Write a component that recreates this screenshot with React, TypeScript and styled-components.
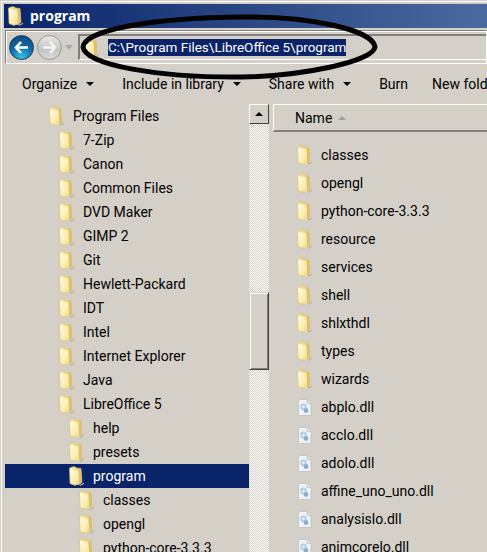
import React from 'react'
import styled, {createGlobalStyle} from 'styled-components'

const Global = createGlobalStyle`
  html, body {
    margin: 0;
    padding: 0;
    background: #d4d0c8;
  }
  body {
    font-family: Roboto, "Open Sans", sans-serif;
    font-size: 14px;
    color: #000;
  }
`

const Root = styled.div`
  position: relative;
  width: 487px;
  height: 552px;
  overflow: hidden;
  background: #d4d0c8;
  box-sizing: border-box;
  padding: 1px 0 0 1px;
`

const Frame = styled.div`
  height: 100%;
  box-sizing: border-box;
  border-top: 1px solid #fff;
  border-left: 1px solid #fff;
  padding: 2px 0 0 2px;
  display: flex;
  flex-direction: column;
`

const TitleBar = styled.div`
  height: 24px;
  flex: none;
  display: flex;
  align-items: center;
  gap: 7px;
  padding: 0 0 1px 4px;
  box-sizing: border-box;
  background: linear-gradient(to right, #0a246a, #4a6a9f);
  color: #fff;
  font-family: "Open Sans", sans-serif;
  font-weight: 700;
  font-size: 14px;
`

const AddressRow = styled.div`
  height: 34px;
  flex: none;
  margin-top: 2px;
  display: flex;
  align-items: center;
  box-sizing: border-box;
  margin-left: 1px;
  border: 1px solid;
  border-color: #808080 #fff #fff #808080;
  box-shadow: inset 1px 1px 0 #fff;
  padding-left: 3px;
`

const NavCircle = styled.div<{$active?: boolean}>`
  width: 25px;
  height: 25px;
  border-radius: 50%;
  flex: none;
  display: flex;
  align-items: center;
  justify-content: center;
  margin-right: 3px;
  border: 1px solid ${p => p.$active ? '#16405f' : '#9a9a9a'};
  box-sizing: border-box;
  background: ${p => p.$active
    ? 'radial-gradient(circle at 50% 95%, #38c0ee 0%, #116aa8 50%, #0c3f78 100%)'
    : 'linear-gradient(#e8e8e8, #c4c4c4 60%, #d8d8d8)'};
`

const DropCaret = styled.div`
  width: 0;
  height: 0;
  margin: 0 5px 0 0;
  border-left: 4px solid transparent;
  border-right: 4px solid transparent;
  border-top: 5px solid #a8a8a8;
`

const AddressBox = styled.div`
  flex: 1;
  height: 26px;
  display: flex;
  align-items: center;
  gap: 9px;
  padding-left: 4px;
  background: #d4d0c8;
  border-top: 2px solid #808080;
  border-left: 2px solid #808080;
  border-bottom: 1px solid #fff;
  box-sizing: border-box;
`

const SelectedPath = styled.span`
  background: #0a246a;
  color: #fff;
  height: 17px;
  line-height: 17px;
  font-size: 13.5px;
  white-space: nowrap;
`

const Toolbar = styled.div`
  height: 40px;
  flex: none;
  display: flex;
  align-items: center;
  padding-left: 18px;
  white-space: nowrap;
`

const ToolItem = styled.div<{$gap: number}>`
  display: flex;
  align-items: center;
  gap: 9px;
  margin-right: ${p => p.$gap}px;
`

const Caret = styled.div`
  width: 0;
  height: 0;
  border-left: 4px solid transparent;
  border-right: 4px solid transparent;
  border-top: 4px solid #000;
`

const Panes = styled.div`
  flex: 1;
  min-height: 0;
  display: flex;
  margin-left: 1px;
`

const TreePane = styled.div`
  width: 244px;
  flex: none;
  overflow: hidden;
`

const TreeRow = styled.div<{$level: number; $selected?: boolean}>`
  height: 24px;
  display: flex;
  align-items: center;
  gap: 9px;
  padding-left: ${p => 44 + p.$level * 10}px;
  background: ${p => p.$selected ? '#0a246a' : 'transparent'};
  color: ${p => p.$selected ? '#fff' : '#000'};
  white-space: nowrap;
`

const ScrollBar = styled.div`
  width: 20px;
  flex: none;
  display: flex;
  flex-direction: column;
  background-color: #fff;
  background-image: conic-gradient(#d4d0c8 25%, #fff 0 50%, #d4d0c8 0 75%, #fff 0);
  background-size: 2px 2px;
`

const ScrollArrow = styled.div`
  height: 20px;
  flex: none;
  display: flex;
  align-items: center;
  justify-content: center;
  background: #d4d0c8;
  box-sizing: border-box;
  border: 1px solid;
  border-color: #fff #404040 #404040 #fff;
  &::after {
    content: '';
    border-left: 4px solid transparent;
    border-right: 4px solid transparent;
    border-bottom: 4px solid #000;
  }
`

const ScrollThumb = styled.div`
  height: 78px;
  flex: none;
  margin-top: 168px;
  background: #d4d0c8;
  box-sizing: border-box;
  border: 1px solid;
  border-color: #d4d0c8 #404040 #404040 #d4d0c8;
  box-shadow: inset 1px 1px 0 #fff, inset -1px -1px 0 #808080;
`

const ListPane = styled.div`
  flex: 1;
  min-width: 0;
  padding-left: 4px;
`

const HeaderCell = styled.div`
  height: 28px;
  box-sizing: border-box;
  display: flex;
  align-items: center;
  gap: 6px;
  padding-left: 21px;
  margin-bottom: 9px;
  border-top: 1px solid #fff;
  border-left: 1px solid #fff;
  border-bottom: 2px solid #808080;
`

const SortMark = styled.div`
  width: 0;
  height: 0;
  border-left: 4px solid transparent;
  border-right: 4px solid transparent;
  border-bottom: 4px solid #a0a0a0;
`

const FileRow = styled.div`
  height: 28px;
  display: flex;
  align-items: center;
  gap: 9px;
  padding-left: 24px;
  white-space: nowrap;
`

const Outline = styled.svg`
  position: absolute;
  left: 0;
  top: 0;
  pointer-events: none;
`

const FolderIcon: React.FC = () => (
    <svg width={15} height={20} viewBox="0 0 15 20" style={{flex: 'none'}}>
        <defs>
            <linearGradient id="fb" x1="0" x2="1" y1="0" y2="0">
                <stop offset="0" stopColor="#f8eaa6"/>
                <stop offset="1" stopColor="#e2c063"/>
            </linearGradient>
            <linearGradient id="ff" x1="0" x2="1" y1="0" y2="1">
                <stop offset="0" stopColor="#fffce4"/>
                <stop offset=".6" stopColor="#fbeeb0"/>
                <stop offset="1" stopColor="#ecd488"/>
            </linearGradient>
        </defs>
        <path d="M0.5 2 L5 0.5 L8 2 L12 2.5 L13 16 L6 19.5 L1 17.5 Z" fill="url(#fb)" stroke="#d8c07a" strokeWidth="0.6"/>
        <path d="M1 3 L9.5 4.5 L10.5 19 L2 17.5 Z" fill="url(#ff)"/>
        <path d="M9.5 4.5 L12 3 L13 16 L10.5 19 Z" fill="#dcc070"/>
        <path d="M10.5 19 L15 16.5 L15 18 L11 20 Z" fill="#b5b2a8"/>
    </svg>
)

const DllIcon: React.FC = () => (
    <svg width={15} height={17} viewBox="0 0 15 17" style={{flex: 'none'}}>
        <path d="M1.5 .5 H10 L14 4.5 V16.5 H1.5 Z" fill="#f0f2f4" stroke="#c4c6c8"/>
        <path d="M10 .5 V4.5 H14" fill="#e4e8ec" stroke="#c4c6c8"/>
        <circle cx="6.5" cy="8" r="3.4" fill="#b4cfe6"/>
        <circle cx="9" cy="11.5" r="2.4" fill="#8eaecb"/>
        <circle cx="6.5" cy="8" r="1.2" fill="#f0f6fb"/>
    </svg>
)

const tree: Array<[string, number]> = [
    ['Program Files', 0], ['7-Zip', 1], ['Canon', 1], ['Common Files', 1], ['DVD Maker', 1],
    ['GIMP 2', 1], ['Git', 1], ['Hewlett-Packard', 1], ['IDT', 1], ['Intel', 1],
    ['Internet Explorer', 1], ['Java', 1], ['LibreOffice 5', 1], ['help', 2], ['presets', 2],
    ['program', 2], ['classes', 3], ['opengl', 3], ['python-core-3.3.3', 3],
]

const folders = ['classes', 'opengl', 'python-core-3.3.3', 'resource', 'services', 'shell', 'shlxthdl', 'types', 'wizards']
const dlls = ['abplo.dll', 'acclo.dll', 'adolo.dll', 'affine_uno_uno.dll', 'analysislo.dll', 'animcorelo.dll']

export default function App() {
    return <Root>
        <Global/>
        <Frame>
            <TitleBar>
                <FolderIcon/>
                program
            </TitleBar>
            <AddressRow>
                <NavCircle $active>
                    <svg width={15} height={13} viewBox="0 0 15 13">
                        <path d="M7 1 L2 6.5 L7 12 M2 6.5 H14" fill="none" stroke="#fff" strokeWidth="2.6"/>
                    </svg>
                </NavCircle>
                <NavCircle>
                    <svg width={15} height={13} viewBox="0 0 15 13">
                        <path d="M8 1 L13 6.5 L8 12 M13 6.5 H1" fill="none" stroke="#f4f4f4" strokeWidth="2.4"/>
                    </svg>
                </NavCircle>
                <DropCaret/>
                <AddressBox>
                    <FolderIcon/>
                    <SelectedPath>C:\Program Files\LibreOffice 5\program</SelectedPath>
                </AddressBox>
            </AddressRow>
            <Toolbar>
                <ToolItem $gap={28}>Organize<Caret/></ToolItem>
                <ToolItem $gap={28}>Include in library<Caret/></ToolItem>
                <ToolItem $gap={28}>Share with<Caret/></ToolItem>
                <ToolItem $gap={24}>Burn</ToolItem>
                <ToolItem $gap={0}>New folder</ToolItem>
            </Toolbar>
            <Panes>
                <TreePane>
                    {tree.map(([name, level]) => (
                        <TreeRow key={name + level} $level={level} $selected={name === 'program'}>
                            <FolderIcon/>
                            {name}
                        </TreeRow>
                    ))}
                </TreePane>
                <ScrollBar>
                    <ScrollArrow/>
                    <ScrollThumb/>
                </ScrollBar>
                <ListPane>
                    <HeaderCell>Name<SortMark/></HeaderCell>
                    {folders.map(name => <FileRow key={name}><FolderIcon/>{name}</FileRow>)}
                    {dlls.map(name => <FileRow key={name}><DllIcon/>{name}</FileRow>)}
                </ListPane>
            </Panes>
        </Frame>
        <Outline width={487} height={552}>
            <path d="M83 47 C85 30 150 18 243 17 C310 16 373 30 375 47 C373 62 300 76 243 77 C160 78 85 65 83 47 Z"
                  fill="none" stroke="#000" strokeWidth="5"/>
        </Outline>
    </Root>
}
